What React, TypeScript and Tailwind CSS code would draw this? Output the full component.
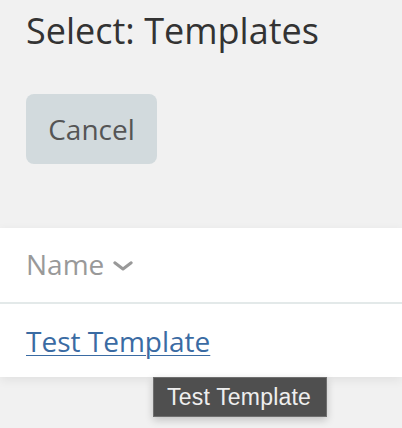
export default function App() {
  return (
    <div className="relative min-h-screen bg-[#f1f1f1] font-['Open_Sans',sans-serif]">
      {/* Header */}
      <div className="px-[26px] pt-[4px] pb-[64px]">
        <h1 className="text-[36px] leading-[54px] text-[#333333]">Select: Templates</h1>
        <div className="mt-[36px] flex">
          <button
            type="button"
            className="h-[70px] w-[131px] rounded-[8px] bg-[#d2dadd] text-[28px] leading-[42px] text-[#555555]"
          >
            Cancel
          </button>
        </div>
      </div>

      {/* Table */}
      <div className="bg-white shadow-[0_3px_10px_rgba(0,0,0,0.07)]">
        <div className="flex items-center border-b-2 border-[#e3e9e9] px-[26px] pt-[15px] pb-[17px]">
          <span className="text-[28px] leading-[42px] text-[#999999]">Name</span>
          <svg viewBox="0 0 20 10" className="ml-[9px] mt-[3px] h-[10px] w-[20px]" fill="none">
            <polyline
              points="1.8,1.8 10,8 18.2,1.8"
              stroke="#999999"
              strokeWidth="3"
              strokeLinecap="round"
              strokeLinejoin="round"
            />
          </svg>
        </div>
        <div className="flex px-[26px] pt-[16px] pb-[15px]">
          <a href="#" className="text-[28px] leading-[42px] text-[#3a6ba3] underline underline-offset-[3px] decoration-1">
            Test Template
          </a>
        </div>
      </div>

      {/* Tooltip */}
      <div className="absolute left-[153px] top-[377px] flex h-[40px] w-[174px] items-center border border-[#6f6f6f] bg-[#4f4f4f] pl-[13px] font-['Liberation_Sans',Arial,sans-serif] text-[23px] tracking-[0.2px] text-[#eeeeee] shadow-[0_3px_8px_rgba(0,0,0,0.2)]">
        Test Template
      </div>
    </div>
  );
}
